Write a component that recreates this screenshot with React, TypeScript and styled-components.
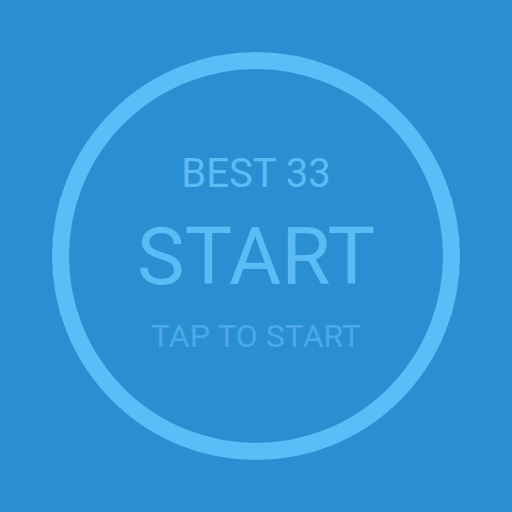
import { createGlobalStyle } from "styled-components";
import styled from "styled-components";

const GlobalStyle = createGlobalStyle`
  html, body {
    margin: 0;
    padding: 0;
    background: #2a8fd1;
  }
  body {
    font-family: Roboto, "Liberation Sans", Arial, sans-serif;
  }
`;

const Screen = styled.div`
  width: 512px;
  height: 512px;
  display: flex;
  align-items: center;
  justify-content: center;
  background: #2a8fd1;
`;

const Ring = styled.div`
  box-sizing: border-box;
  width: 408px;
  height: 408px;
  border-radius: 50%;
  border: 17px solid #59bef8;
  padding-bottom: 7px;
  display: flex;
  flex-direction: column;
  align-items: center;
  justify-content: center;
  gap: 23px;
  cursor: pointer;
`;

const Label = styled.div<{ $size: number; $color: string }>`
  font-size: ${(p) => p.$size}px;
  line-height: 1;
  color: ${(p) => p.$color};
  font-weight: 400;
  white-space: nowrap;
`;

export default function App() {
  return (
    <>
      <GlobalStyle />
      <Screen>
        <Ring>
          <Label $size={40} $color="#5bbcf5">BEST 33</Label>
          <Label $size={80} $color="#5bbcf5">START</Label>
          <Label $size={32} $color="#4aa9e6">TAP TO START</Label>
        </Ring>
      </Screen>
    </>
  );
}
